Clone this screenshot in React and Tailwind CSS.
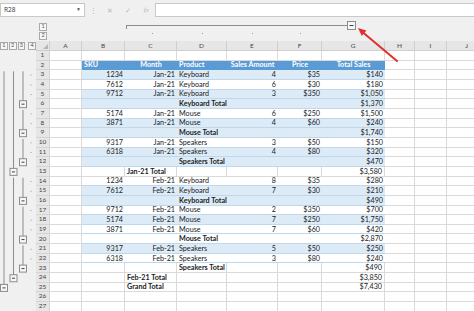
import React from "react";

const cols = [
  { key: "A", w: "w-[32px]" },
  { key: "B", w: "w-[43px]" },
  { key: "C", w: "w-[52px]" },
  { key: "D", w: "w-[50px]" },
  { key: "E", w: "w-[51px]" },
  { key: "F", w: "w-[44px]" },
  { key: "G", w: "w-[63px]" },
  { key: "H", w: "w-[30px]" },
  { key: "I", w: "w-[32px]" },
  { key: "J", w: "w-[40px]" },
];

// B..G values per row; t = empty | head | band | white | plain
const rows = [
  { n: 1, t: "empty" },
  { n: 2, t: "head", v: ["SKU", "Month", "Product", "Sales Amount", "Price", "Total Sales"] },
  { n: 3, t: "band", v: ["1234", "Jan-21", "Keyboard", "4", "$35", "$140"] },
  { n: 4, t: "white", v: ["7612", "Jan-21", "Keyboard", "6", "$30", "$180"] },
  { n: 5, t: "band", v: ["9712", "Jan-21", "Keyboard", "3", "$350", "$1,050"] },
  { n: 6, t: "band", v: ["", "", "Keyboard Total", "", "", "$1,370"], bold: 2 },
  { n: 7, t: "white", v: ["5174", "Jan-21", "Mouse", "6", "$250", "$1,500"] },
  { n: 8, t: "band", v: ["3871", "Jan-21", "Mouse", "4", "$60", "$240"] },
  { n: 9, t: "band", v: ["", "", "Mouse Total", "", "", "$1,740"], bold: 2 },
  { n: 10, t: "white", v: ["9317", "Jan-21", "Speakers", "3", "$50", "$150"] },
  { n: 11, t: "band", v: ["6318", "Jan-21", "Speakers", "4", "$80", "$320"] },
  { n: 12, t: "band", v: ["", "", "Speakers Total", "", "", "$470"], bold: 2 },
  { n: 13, t: "plain", v: ["", "Jan-21 Total", "", "", "", "$3,580"], bold: 1 },
  { n: 14, t: "white", v: ["1234", "Feb-21", "Keyboard", "8", "$35", "$280"] },
  { n: 15, t: "band", v: ["7612", "Feb-21", "Keyboard", "7", "$30", "$210"] },
  { n: 16, t: "band", v: ["", "", "Keyboard Total", "", "", "$490"], bold: 2 },
  { n: 17, t: "white", v: ["9712", "Feb-21", "Mouse", "2", "$350", "$700"] },
  { n: 18, t: "band", v: ["5174", "Feb-21", "Mouse", "7", "$250", "$1,750"] },
  { n: 19, t: "white", v: ["3871", "Feb-21", "Mouse", "7", "$60", "$420"] },
  { n: 20, t: "white", v: ["", "", "Mouse Total", "", "", "$2,870"], bold: 2 },
  { n: 21, t: "band", v: ["9317", "Feb-21", "Speakers", "5", "$50", "$250"] },
  { n: 22, t: "white", v: ["6318", "Feb-21", "Speakers", "3", "$80", "$240"] },
  { n: 23, t: "plain", v: ["", "", "Speakers Total", "", "", "$490"], bold: 2 },
  { n: 24, t: "plain", v: ["", "Feb-21 Total", "", "", "", "$3,850"], bold: 1 },
  { n: 25, t: "plain", v: ["", "Grand Total", "", "", "", "$7,430"], bold: 1 },
  { n: 26, t: "empty" },
  { n: 27, t: "empty" },
];

const dataAlign = ["justify-end", "justify-end", "justify-start", "justify-end", "justify-end", "justify-end"];
const headAlign = ["justify-start", "justify-center", "justify-start", "justify-center", "justify-center", "justify-center"];

const RH = 9.67;
const top = (n) => (n - 1) * RH;
const mid = (n) => (n - 0.5) * RH;

const MinusBox = ({ x, y }) => (
  <g>
    <rect x={x + 0.5} y={y - 3.5} width="7" height="7" fill="#f6f6f6" stroke="#8c8c8c" strokeWidth="1" />
    <line x1={x + 2.5} y1={y} x2={x + 5.5} y2={y} stroke="#444" strokeWidth="1" />
  </g>
);

const rowGroups = [
  { x: 4, from: 3, to: 25, bx: 0 },
  { x: 13.5, from: 3, to: 13, bx: 9.5 },
  { x: 13.5, from: 14, to: 24, bx: 9.5 },
  { x: 23, from: 3, to: 6, bx: 19 },
  { x: 23, from: 7, to: 9, bx: 19 },
  { x: 23, from: 10, to: 12, bx: 19 },
  { x: 23, from: 14, to: 16, bx: 19 },
  { x: 23, from: 17, to: 20, bx: 19 },
  { x: 23, from: 21, to: 23, bx: 19 },
];
const dotRows = [3, 4, 5, 7, 8, 10, 11, 14, 15, 17, 18, 19, 21, 22];

const RowOutline = () => (
  <svg width="36" height="262" className="block">
    {rowGroups.map((g, i) => (
      <g key={i}>
        <line x1={g.x} y1={top(g.from) + 1} x2={g.x} y2={mid(g.to) - 3} stroke="#8c8c8c" strokeWidth="1" />
        <MinusBox x={g.bx} y={mid(g.to)} />
      </g>
    ))}
    {dotRows.map((r) => (
      <rect key={r} x="30.5" y={mid(r) - 0.5} width="1" height="1" fill="#9a9a9a" />
    ))}
  </svg>
);

const LevelBtn = ({ n }) => (
  <div className="w-[8px] h-[8px] border border-[#a9a9a9] bg-[#f7f7f7] flex items-center justify-center text-[5.5px] leading-none text-[#555]">
    {n}
  </div>
);

function Cell({ col, ci, row }) {
  const base = `${col.w} shrink-0 h-full flex items-center px-[2px] whitespace-nowrap`;
  const inTable = ci >= 1 && ci <= 6;
  if (!inTable || row.t === "empty") {
    return <div className={`${base} bg-white border-r border-b border-[#dadada]`} />;
  }
  const val = row.v ? row.v[ci - 1] : "";
  if (row.t === "head") {
    return (
      <div className={`${base} ${headAlign[ci - 1]} bg-[#5b9bd5] text-white font-bold border-b border-[#5b9bd5]`}>
        {val}
      </div>
    );
  }
  const bold = row.bold === ci - 1;
  const align = bold ? "justify-start" : dataAlign[ci - 1];
  let skin = "bg-white border-r border-b border-[#dadada]";
  if (row.t === "band") skin = "bg-[#ddebf7] border-b border-[#bdd7ee]";
  if (row.t === "white") skin = "bg-white border-b border-[#bdd7ee]";
  return (
    <div className={`${base} ${align} ${skin} ${bold ? "font-bold" : ""}`}>
      <span className="relative z-10">{val}</span>
    </div>
  );
}

export default function App() {
  return (
    <div className="relative w-[474px] h-[311px] overflow-hidden bg-[#f0f0f0] font-[Lato,sans-serif] text-[#222]">
      {/* formula bar */}
      <div className="h-[20px] flex items-center bg-[#f0f0f0]">
        <div className="w-[85px] h-[14px] bg-white border border-[#c8c8c8] flex items-center justify-between px-[3px] text-[6.5px] text-[#333] font-[Open_Sans,sans-serif]">
          <span>R28</span>
          <span className="text-[5px] text-[#555]">▼</span>
        </div>
        <div className="w-[16px] text-center text-[7px] text-[#b0b0b0] leading-none">⋮</div>
        <div className="w-[54px] flex items-center justify-around text-[7px] text-[#b8b8b8]">
          <span>✕</span>
          <span>✓</span>
          <span className="italic font-[Liberation_Serif,serif]">fx</span>
        </div>
        <div className="flex-1 h-[14px] bg-white border border-[#c8c8c8] border-r-0" />
      </div>

      {/* column outline band */}
      <div className="h-[21px] flex">
        <div className="w-[36px] shrink-0" />
        <div className="w-[14px] shrink-0 flex flex-col items-center pt-[3px] gap-[1px]">
          <LevelBtn n="1" />
          <LevelBtn n="2" />
        </div>
        <svg width="424" height="21" className="block">
          <line x1="76" y1="5.5" x2="297" y2="5.5" stroke="#8c8c8c" strokeWidth="1" />
          <line x1="76.5" y1="5" x2="76.5" y2="9" stroke="#8c8c8c" strokeWidth="1" />
          <rect x="297.5" y="1.5" width="8" height="8" fill="#f6f6f6" stroke="#8c8c8c" strokeWidth="1" />
          <line x1="299.5" y1="5.5" x2="303.5" y2="5.5" stroke="#444" strokeWidth="1" />
          {[102, 152, 202, 250].map((x) => (
            <rect key={x} x={x} y="13" width="1" height="1" fill="#9a9a9a" />
          ))}
        </svg>
      </div>

      {/* column headers */}
      <div className="h-[10px] flex">
        <div className="w-[36px] shrink-0 flex items-center gap-[1px]">
          <LevelBtn n="1" />
          <LevelBtn n="2" />
          <LevelBtn n="3" />
          <div className="w-[1px]" />
          <LevelBtn n="4" />
        </div>
        <div className="w-[14px] shrink-0 relative bg-[#e6e6e6] border-r border-b border-[#cfcfcf]">
          <div className="absolute right-[1px] bottom-[1px] w-0 h-0 border-l-[5px] border-l-transparent border-b-[5px] border-b-[#b5b5b5]" />
        </div>
        {cols.map((c) => (
          <div
            key={c.key}
            className={`${c.w} shrink-0 bg-[#e6e6e6] border-r border-b border-[#cfcfcf] flex items-center justify-center text-[6.5px] text-[#444]`}
          >
            {c.key}
          </div>
        ))}
      </div>

      {/* sheet body */}
      <div className="flex">
        <div className="w-[36px] shrink-0">
          <RowOutline />
        </div>
        <div className="flex flex-col">
          {rows.map((r) => (
            <div key={r.n} className="h-[9.67px] flex text-[7.2px] leading-none">
              <div className="w-[14px] shrink-0 h-full bg-[#e6e6e6] border-r border-b border-[#d4d4d4] flex items-center justify-center text-[6.5px] text-[#444]">
                {r.n}
              </div>
              {cols.map((c, ci) => (
                <Cell key={c.key} col={c} ci={ci} row={r} />
              ))}
            </div>
          ))}
        </div>
      </div>

      {/* callout arrow */}
      <svg className="absolute top-0 left-0 pointer-events-none" width="474" height="311">
        <line x1="397" y1="61" x2="363" y2="32.5" stroke="#e0312b" strokeWidth="2" strokeLinecap="round" />
        <polygon points="358,28 366.4,30.5 361.8,35.9" fill="#e0312b" />
      </svg>
    </div>
  );
}
